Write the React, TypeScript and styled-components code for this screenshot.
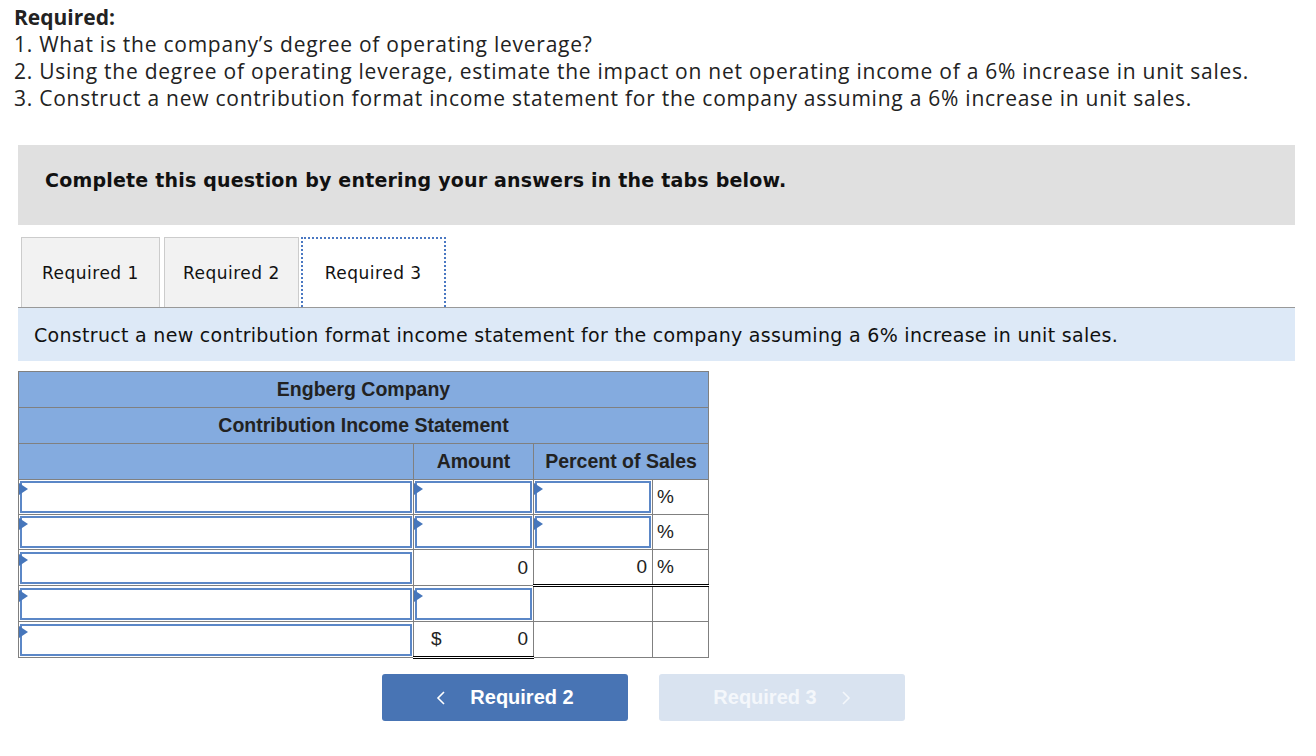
import React from 'react';
import styled, { createGlobalStyle, css } from 'styled-components';

const GlobalStyle = createGlobalStyle`
    body {
        margin: 0;
        background: #fff;
        color: #1a1a1a;
        font-family: "Liberation Sans", Arial, sans-serif;
    }
`;

const Page = styled.div`
    width: 1316px;
    padding-top: 4px;
`;

const Question = styled.div`
    padding-left: 14px;
    font-family: "Open Sans", Lato, sans-serif;
    font-size: 21px;
    letter-spacing: 0.75px;
    line-height: 27px;
    color: #222;
`;

const QuestionTitle = styled.div`
    font-weight: bold;
    letter-spacing: 0;
`;

const Content = styled.div`
    margin: 33px 21px 0 18px;
`;

const Banner = styled.div`
    height: 80px;
    background: #e0e0e0;
    display: flex;
    align-items: center;
    padding-left: 27px;
    padding-bottom: 10px;
    box-sizing: border-box;
    font-family: "DejaVu Sans", Verdana, sans-serif;
    font-weight: bold;
    font-size: 19px;
    letter-spacing: 0.2px;
    color: #111;
`;

const TabBar = styled.div`
    display: flex;
    margin-top: 12px;
    padding-left: 3px;
    border-bottom: 1px solid #999;
`;

const Tab = styled.div<{ $active?: boolean; $gap: number; $pad: number }>`
    height: 70px;
    box-sizing: border-box;
    display: flex;
    align-items: center;
    padding: 0 ${p => p.$pad}px;
    margin-right: ${p => p.$gap}px;
    font-family: "DejaVu Sans", Verdana, sans-serif;
    font-size: 17px;
    letter-spacing: 0.5px;
    color: #111;
    ${p => p.$active
        ? css`
            background: #fff;
            border: 2px dotted #4a78c2;
            border-bottom: none;
        `
        : css`
            background: #f2f2f2;
            border: 1px solid #ccc;
            border-bottom: none;
        `}
`;

const Instruction = styled.div`
    height: 53px;
    background: #dde9f7;
    display: flex;
    align-items: center;
    padding-left: 16px;
    font-family: "DejaVu Sans", Verdana, sans-serif;
    font-size: 19px;
    letter-spacing: 0.3px;
    color: #111;
`;

const Statement = styled.table`
    margin-top: 10px;
    width: 690px;
    border-collapse: collapse;
    table-layout: fixed;
    border: 1px solid #808080;
`;

const HeadCell = styled.th`
    height: 35px;
    padding: 0;
    background: #84abdf;
    border: 1px solid #808080;
    text-align: center;
    font-size: 19.5px;
    font-weight: bold;
    color: #222;
`;

const Cell = styled.td<{ $top?: boolean; $double?: boolean }>`
    height: 34px;
    padding: 0;
    border: 1px solid #808080;
    font-size: 19px;
    color: #222;
    ${p => p.$top && css`border-top: 1px solid #000;`}
    ${p => p.$double && css`border-bottom: 3px double #000;`}
`;

const InputBox = styled.div`
    position: relative;
    height: 32px;
    margin: 0 1px;
    border: 2px solid #5b87c7;
    box-sizing: border-box;
    background: #fff;

    &::before {
        content: "";
        position: absolute;
        left: -3px;
        top: 0;
        border-top: 6px solid transparent;
        border-bottom: 6px solid transparent;
        border-left: 9px solid #4676bb;
    }
`;

const Value = styled.div`
    display: flex;
    justify-content: space-between;
    align-items: center;
    padding: 0 5px 0 17px;
`;

const Unit = styled.div`
    padding-left: 4px;
`;

const Nav = styled.div`
    display: flex;
    gap: 31px;
    margin-top: 15px;
    padding-left: 364px;
`;

const NavButton = styled.div<{ $disabled?: boolean }>`
    width: 246px;
    height: 47px;
    border-radius: 3px;
    display: flex;
    align-items: center;
    justify-content: center;
    gap: 24px;
    font-size: 20px;
    font-weight: bold;
    color: #fff;
    background: ${p => (p.$disabled ? '#d9e3f0' : '#4874b4')};
    ${p => p.$disabled && css`color: #f4f7fb;`}
`;

const Chevron = ({ dir }: { dir: 'left' | 'right' }) => (
    <svg width="10" height="16" viewBox="0 0 10 16">
        <path
            d={dir === 'left' ? 'M8 2 L2 8 L8 14' : 'M2 2 L8 8 L2 14'}
            fill="none"
            stroke="currentColor"
            strokeWidth="1.6"
        />
    </svg>
);

type Row = {
    amount: 'input' | 'zero' | 'dollar';
    percent: 'input' | 'zero' | 'none';
};

const rows: Row[] = [
    { amount: 'input', percent: 'input' },
    { amount: 'input', percent: 'input' },
    { amount: 'zero', percent: 'zero' },
    { amount: 'input', percent: 'none' },
    { amount: 'dollar', percent: 'none' },
];

const App: React.FC = () => {
    return (
        <>
            <GlobalStyle />
            <Page>
                <Question>
                    <QuestionTitle>Required:</QuestionTitle>
                    <div>1. What is the company’s degree of operating leverage?</div>
                    <div>2. Using the degree of operating leverage, estimate the impact on net operating income of a 6% increase in unit sales.</div>
                    <div>3. Construct a new contribution format income statement for the company assuming a 6% increase in unit sales.</div>
                </Question>

                <Content>
                    <Banner>Complete this question by entering your answers in the tabs below.</Banner>

                    <TabBar>
                        <Tab $gap={4} $pad={20}>Required 1</Tab>
                        <Tab $gap={2} $pad={18}>Required 2</Tab>
                        <Tab $active $gap={0} $pad={22}>Required 3</Tab>
                    </TabBar>

                    <Instruction>
                        Construct a new contribution format income statement for the company assuming a 6% increase in unit sales.
                    </Instruction>

                    <Statement>
                        <colgroup>
                            <col style={{ width: '395px' }} />
                            <col style={{ width: '120px' }} />
                            <col style={{ width: '119px' }} />
                            <col style={{ width: '56px' }} />
                        </colgroup>
                        <thead>
                            <tr><HeadCell colSpan={4}>Engberg Company</HeadCell></tr>
                            <tr><HeadCell colSpan={4}>Contribution Income Statement</HeadCell></tr>
                            <tr>
                                <HeadCell />
                                <HeadCell>Amount</HeadCell>
                                <HeadCell colSpan={2}>Percent of Sales</HeadCell>
                            </tr>
                        </thead>
                        <tbody>
                            {rows.map((r, i) => (
                                <tr key={i}>
                                    <Cell><InputBox /></Cell>
                                    {r.amount === 'input' && <Cell><InputBox /></Cell>}
                                    {r.amount === 'zero' && (
                                        <Cell $top><Value><span /><span>0</span></Value></Cell>
                                    )}
                                    {r.amount === 'dollar' && (
                                        <Cell $top $double><Value><span>$</span><span>0</span></Value></Cell>
                                    )}
                                    {r.percent === 'input' && (
                                        <>
                                            <Cell><InputBox /></Cell>
                                            <Cell><Unit>%</Unit></Cell>
                                        </>
                                    )}
                                    {r.percent === 'zero' && (
                                        <>
                                            <Cell $top $double><Value><span /><span>0</span></Value></Cell>
                                            <Cell $top $double><Unit>%</Unit></Cell>
                                        </>
                                    )}
                                    {r.percent === 'none' && (
                                        <>
                                            <Cell />
                                            <Cell />
                                        </>
                                    )}
                                </tr>
                            ))}
                        </tbody>
                    </Statement>

                    <Nav>
                        <NavButton>
                            <Chevron dir="left" />
                            Required 2
                        </NavButton>
                        <NavButton $disabled>
                            Required 3
                            <Chevron dir="right" />
                        </NavButton>
                    </Nav>
                </Content>
            </Page>
        </>
    );
};

export default App;
